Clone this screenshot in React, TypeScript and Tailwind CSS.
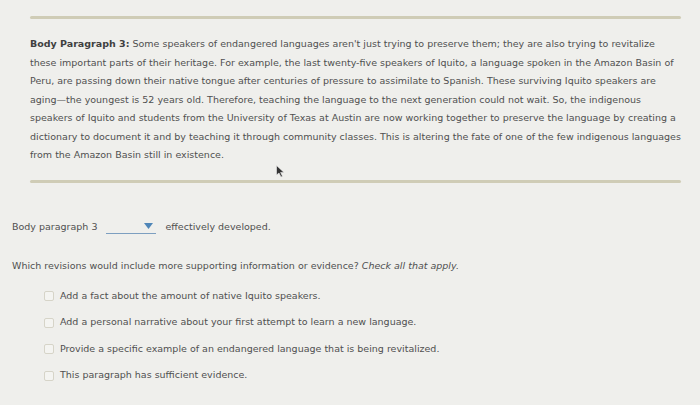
const lines = [
    "these important parts of their heritage. For example, the last twenty-five speakers of Iquito, a language spoken in the Amazon Basin of",
    "Peru, are passing down their native tongue after centuries of pressure to assimilate to Spanish. These surviving Iquito speakers are",
    "aging—the youngest is 52 years old. Therefore, teaching the language to the next generation could not wait. So, the indigenous",
    "speakers of Iquito and students from the University of Texas at Austin are now working together to preserve the language by creating a",
    "dictionary to document it and by teaching it through community classes. This is altering the fate of one of the few indigenous languages",
    "from the Amazon Basin still in existence.",
];

const options = [
    "Add a fact about the amount of native Iquito speakers.",
    "Add a personal narrative about your first attempt to learn a new language.",
    "Provide a specific example of an endangered language that is being revitalized.",
    "This paragraph has sufficient evidence.",
];

const App = () => {
    return (
        <div
            className="relative w-[700px] h-[405px] overflow-hidden bg-[#efefec] text-[#505050] text-[9.5px]"
            style={{ fontFamily: '"DejaVu Sans", Verdana, sans-serif' }}
        >
            {/* passage */}
            <div className="pt-[16px] pl-[30px] w-[681px]">
                <div className="h-[3px] bg-[#cfccb6] rounded-full" />
                <div className="mt-[16px] leading-[18.5px] whitespace-nowrap">
                    <div>
                        <span className="font-bold text-[#3f3f3f]">Body Paragraph 3:</span> Some
                        speakers of endangered languages aren't just trying to preserve them; they
                        are also trying to revitalize
                    </div>
                    {lines.map((l) => (
                        <div key={l}>{l}</div>
                    ))}
                </div>
                <div className="mt-[15px] h-[3px] bg-[#cfccb6] rounded-full" />
            </div>

            {/* dropdown sentence */}
            <div className="mt-[37px] pl-[12px] flex items-center gap-[9px]">
                <span>Body paragraph 3</span>
                <div className="relative w-[50px] h-[14px] border-b border-[#7d9fc0]">
                    <svg
                        className="absolute right-[3px] top-[3px]"
                        width="9"
                        height="6"
                        viewBox="0 0 9 6"
                    >
                        <path d="M0 0 L9 0 L4.5 6 Z" fill="#4f86b8" />
                    </svg>
                </div>
                <span>effectively developed.</span>
            </div>

            <div className="mt-[25px] pl-[12px]">
                Which revisions would include more supporting information or evidence?{" "}
                <span className="italic">Check all that apply.</span>
            </div>

            {/* options */}
            <div className="mt-[14px] pl-[44px] flex flex-col gap-[8.5px]">
                {options.map((o) => (
                    <label key={o} className="flex items-center gap-[6px] h-[18px]">
                        <span className="w-[10px] h-[10px] rounded-[2px] border border-[#d6d4c8] bg-[#f4f4f1]" />
                        <span>{o}</span>
                    </label>
                ))}
            </div>

            {/* mouse pointer */}
            <svg
                className="absolute left-[276px] top-[165px]"
                width="9"
                height="13"
                viewBox="0 0 9 13"
            >
                <path
                    d="M0.5 0.5 L0.5 10 L3 8 L5 12 L6.5 11.3 L4.6 7.4 L8 7.4 Z"
                    fill="#333"
                    stroke="#eee"
                    strokeWidth="0.6"
                />
            </svg>
        </div>
    );
};

export default App;
